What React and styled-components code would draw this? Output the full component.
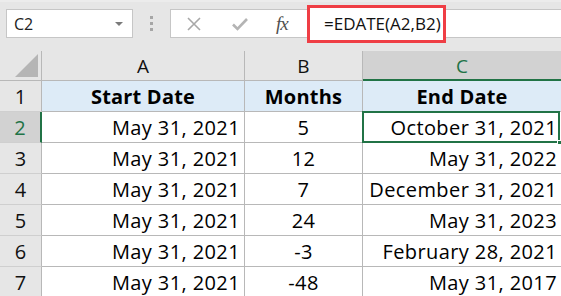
import React from 'react';
import styled, { createGlobalStyle } from 'styled-components';

const GlobalStyle = createGlobalStyle`
  html, body {
    margin: 0;
    padding: 0;
    background: #ffffff;
  }
  * {
    box-sizing: border-box;
  }
`;

const GREEN = '#217346';
const GRID = '#b8b8b8';
const CELL_FONT = '"Open Sans", "Liberation Sans", sans-serif';

const columns = ['A', 'B', 'C'];

const rows = [
  ['May 31, 2021', '5', 'October 31, 2021'],
  ['May 31, 2021', '12', 'May 31, 2022'],
  ['May 31, 2021', '7', 'December 31, 2021'],
  ['May 31, 2021', '24', 'May 31, 2023'],
  ['May 31, 2021', '-3', 'February 28, 2021'],
  ['May 31, 2021', '-48', 'May 31, 2017'],
];

const App = () => {
  return (
    <>
      <GlobalStyle />
      <Sheet>
        <Toolbar>
          <NameBox>
            <span>C2</span>
            <Caret />
          </NameBox>
          <Splitter>
            <Dot />
            <Dot />
            <Dot />
          </Splitter>
          <FormulaBar>
            <IconSlot>
              <svg width="16" height="16" viewBox="0 0 16 16">
                <path d="M2 2 L14 14 M14 2 L2 14" stroke="#a8a8a8" strokeWidth="1.6" fill="none" />
              </svg>
            </IconSlot>
            <IconSlot>
              <svg width="18" height="16" viewBox="0 0 18 16">
                <path d="M2 8.5 L6.5 13 L16 3" stroke="#b4b4b4" strokeWidth="2.6" fill="none" />
              </svg>
            </IconSlot>
            <Fx>fx</Fx>
            <Highlight>=EDATE(A2,B2)</Highlight>
          </FormulaBar>
        </Toolbar>

        <Grid>
          <Corner>
            <svg width="23" height="23" viewBox="0 0 23 23">
              <polygon points="23,0 23,23 0,23" fill="#b5b5b5" />
            </svg>
          </Corner>
          {columns.map(c => (
            <ColHeader key={c} $active={c === 'C'}>{c}</ColHeader>
          ))}

          <RowHeader>1</RowHeader>
          <TitleCell>Start Date</TitleCell>
          <TitleCell>Months</TitleCell>
          <TitleCell>End Date</TitleCell>

          {rows.map((r, i) => (
            <React.Fragment key={i}>
              <RowHeader $active={i === 0}>{i + 2}</RowHeader>
              <Cell $align="right">{r[0]}</Cell>
              <Cell $align="center">{r[1]}</Cell>
              <Cell $align="right" $selected={i === 0}>
                {r[2]}
                {i === 0 && <FillHandle />}
              </Cell>
            </React.Fragment>
          ))}
        </Grid>
      </Sheet>
    </>
  );
};

export default App;

const Sheet = styled.div`
  width: 561px;
  height: 296px;
  overflow: hidden;
  background: #ffffff;
`;

const Toolbar = styled.div`
  height: 51px;
  background: #e6e6e6;
  border-top: 2px solid #ececec;
  display: flex;
  align-items: flex-start;
  padding: 7px 0 0 6px;
`;

const NameBox = styled.div`
  width: 127px;
  height: 29px;
  background: #ffffff;
  border: 1px solid #c6c6c6;
  display: flex;
  align-items: center;
  justify-content: space-between;
  padding: 0 9px 0 7px;
  font-family: "Open Sans", "Liberation Sans", sans-serif;
  font-size: 16px;
  color: #222;
`;

const Caret = styled.span`
  width: 0;
  height: 0;
  border-left: 4px solid transparent;
  border-right: 4px solid transparent;
  border-top: 4px solid #7a7a7a;
`;

const Splitter = styled.div`
  width: 37px;
  height: 29px;
  display: flex;
  flex-direction: column;
  align-items: center;
  justify-content: center;
  gap: 3px;
`;

const Dot = styled.span`
  width: 3px;
  height: 3px;
  background: #a6a6a6;
`;

const FormulaBar = styled.div`
  flex: 1;
  height: 29px;
  background: #ffffff;
  border: 1px solid #c6c6c6;
  border-right: none;
  display: flex;
  align-items: center;
  padding-left: 13px;
`;

const IconSlot = styled.span`
  width: 45px;
  display: flex;
  align-items: center;
  justify-content: flex-start;
  padding-left: 2px;
`;

const Fx = styled.span`
  width: 26px;
  font-family: "Liberation Serif", serif;
  font-style: italic;
  font-size: 19px;
  color: #505050;
  letter-spacing: -1px;
  padding-left: 2px;
`;

const Highlight = styled.span`
  margin-left: 10px;
  width: 133px;
  height: 32px;
  flex-shrink: 0;
  display: flex;
  align-items: center;
  padding-left: 14px;
  outline: 3px solid #ef3e45;
  background: #ffffff;
  font-family: ${CELL_FONT};
  font-size: 17px;
  color: #111;
`;

const Grid = styled.div`
  display: grid;
  grid-template-columns: 42px 203px 118px 199px;
  grid-template-rows: 30px repeat(7, 31px);
  font-family: ${CELL_FONT};
`;

const Corner = styled.div`
  background: #e6e6e6;
  border-right: 1px solid ${GRID};
  border-bottom: 1px solid ${GRID};
  display: flex;
  align-items: flex-end;
  justify-content: flex-end;
  padding: 0 3px 3px 0;
`;

const ColHeader = styled.div`
  background: ${p => (p.$active ? '#d2d2d2' : '#e6e6e6')};
  color: ${p => (p.$active ? GREEN : '#111')};
  border-right: 1px solid ${GRID};
  border-bottom: ${p => (p.$active ? `2px solid ${GREEN}` : `1px solid ${GRID}`)};
  display: flex;
  align-items: center;
  justify-content: center;
  font-size: 19px;
  padding-top: 1px;
`;

const RowHeader = styled.div`
  background: ${p => (p.$active ? '#d2d2d2' : '#e6e6e6')};
  color: ${p => (p.$active ? GREEN : '#111')};
  border-right: ${p => (p.$active ? `2px solid ${GREEN}` : `1px solid ${GRID}`)};
  border-bottom: 1px solid #cfcfcf;
  display: flex;
  align-items: center;
  justify-content: center;
  font-size: 20px;
`;

const Cell = styled.div`
  position: relative;
  border-right: 1px solid ${GRID};
  border-bottom: 1px solid ${GRID};
  display: flex;
  align-items: center;
  justify-content: ${p => (p.$align === 'right' ? 'flex-end' : 'center')};
  padding: 0 4px 0 4px;
  font-size: 20px;
  letter-spacing: 0.4px;
  color: #000;
  white-space: nowrap;

  ${p => p.$selected && `
    &::after {
      content: '';
      position: absolute;
      top: -1px;
      left: -1px;
      right: 1px;
      bottom: -1px;
      border: 2px solid ${GREEN};
      pointer-events: none;
    }
  `}
`;

const TitleCell = styled(Cell)`
  background: #ddebf7;
  font-weight: 700;
  letter-spacing: 0.2px;
  justify-content: center;
`;

const FillHandle = styled.span`
  position: absolute;
  right: -1px;
  bottom: -3px;
  width: 5px;
  height: 5px;
  background: ${GREEN};
  border: 1px solid #ffffff;
  z-index: 1;
`;
